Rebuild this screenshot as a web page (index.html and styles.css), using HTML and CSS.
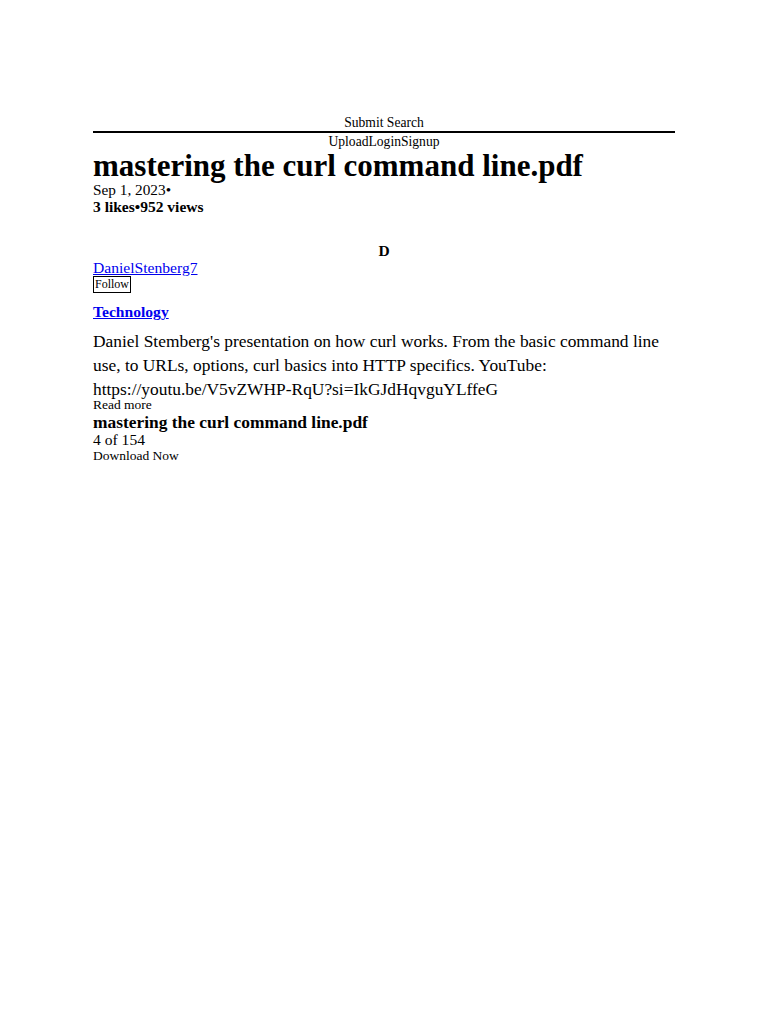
FILE: index.html
```html
<!DOCTYPE html>
<html lang="en">
<head>
<meta charset="utf-8">
<title>mastering the curl command line.pdf</title>
<link rel="stylesheet" href="styles.css">
</head>
<body>
<div class="page">
  <header class="top">
    <form class="search"><span class="search-btn">Submit Search</span></form>
    <hr class="rule">
    <nav class="nav"><span>Upload</span><span>Login</span><span>Signup</span></nav>
  </header>
  <main>
    <h1 class="title">mastering the curl command line.pdf</h1>
    <div class="date">Sep 1, 2023•</div>
    <div class="stats">3 likes•952 views</div>
    <div class="avatar">D</div>
    <a class="author" href="#">DanielStenberg7</a>
    <button class="follow">Follow</button>
    <a class="category" href="#">Technology</a>
    <p class="desc">Daniel Stemberg's presentation on how curl works. From the basic command line use, to URLs, options, curl basics into HTTP specifics. YouTube: https://youtu.be/V5vZWHP-RqU?si=IkGJdHqvguYLffeG</p>
    <div class="small read-more">Read more</div>
    <div class="doc-title">mastering the curl command line.pdf</div>
    <div class="pages">4 of 154</div>
    <div class="small">Download Now</div>
  </main>
</div>
</body>
</html>
```
FILE: styles.css
```css
html, body {
  margin: 0;
  padding: 0;
  background: #fff;
}
body {
  font-family: "Liberation Serif", "Times New Roman", serif;
  color: #000;
}
.page {
  width: 582px;
  margin: 0 auto;
  padding-top: 115px;
}
.search {
  text-align: center;
  font-size: 13.6px;
  line-height: 15px;
  margin: 0;
}
.rule {
  border: 0;
  border-top: 2px solid #000;
  margin: 1px 0 1px;
}
.nav {
  text-align: center;
  font-size: 13.6px;
  line-height: 16px;
}
.title {
  font-size: 31px;
  line-height: 32px;
  margin: 0 0 -1px;
  font-weight: bold;
}
.date {
  font-size: 15.3px;
  line-height: 17px;
}
.stats {
  font-size: 15.5px;
  line-height: 17px;
  font-weight: bold;
}
.avatar {
  text-align: center;
  font-weight: bold;
  font-size: 15.5px;
  line-height: 17px;
  margin-top: 27px;
}
.author {
  display: block;
  color: #00e;
  font-size: 15.6px;
  line-height: 17px;
}
.follow {
  display: block;
  font-family: "Liberation Serif", "Times New Roman", serif;
  font-size: 12px;
  line-height: 15px;
  background: #fff;
  color: #000;
  border: 1px solid #000;
  padding: 0 1px;
  margin: 0;
}
.category {
  display: block;
  color: #00e;
  font-weight: bold;
  font-size: 15.6px;
  line-height: 17px;
  margin-top: 10px;
}
.desc {
  font-size: 17.4px;
  line-height: 24px;
  margin: 9px 0 0;
}
.small {
  font-size: 13.5px;
  line-height: 16px;
}
.read-more {
  margin-top: -4px;
}
.doc-title {
  font-weight: bold;
  font-size: 17.4px;
  line-height: 18px;
}
.pages {
  font-size: 15.6px;
  line-height: 17px;
}
```
